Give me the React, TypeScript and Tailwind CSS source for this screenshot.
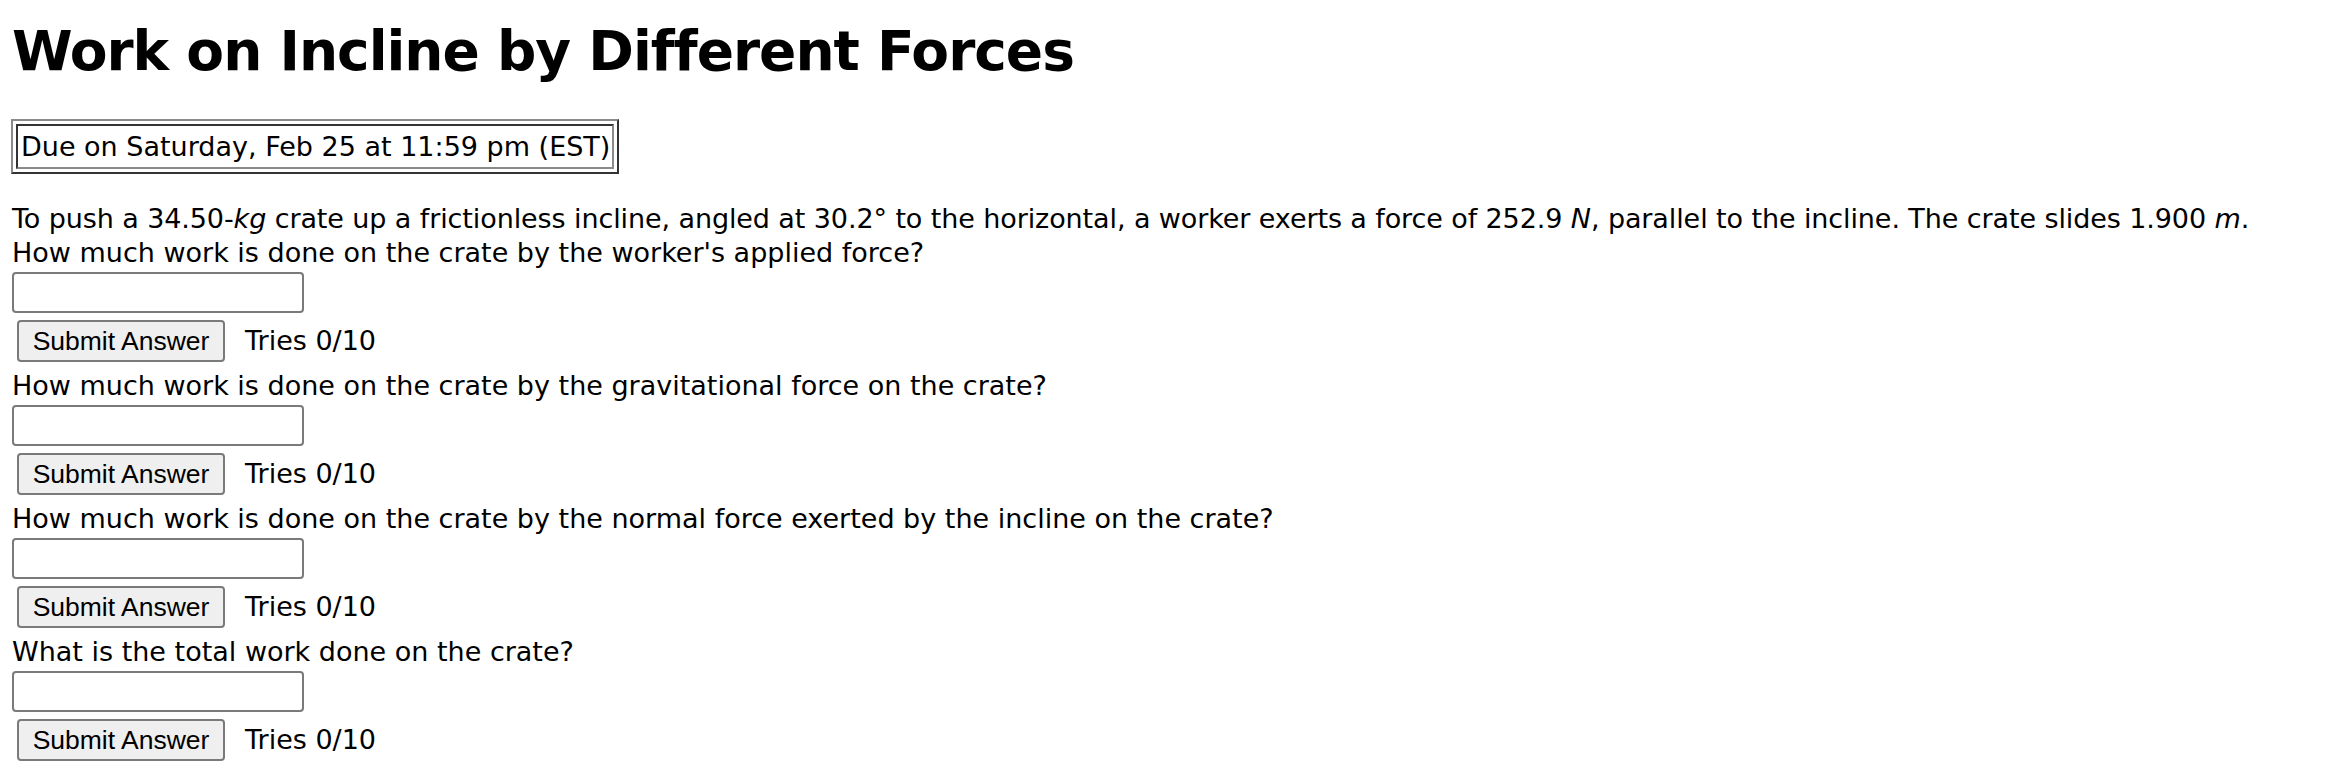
import React from "react";

const questions = [
  "How much work is done on the crate by the worker's applied force?",
  "How much work is done on the crate by the gravitational force on the crate?",
  "How much work is done on the crate by the normal force exerted by the incline on the crate?",
  "What is the total work done on the crate?",
];

function Block({ q, first }: { q: string; first: boolean }) {
  return (
    <div className={first ? "" : "mt-[7px]"}>
      {!first && <div className="h-[34px] leading-[34px] whitespace-nowrap">{q}</div>}
      <input
        type="text"
        className="block mt-[2px] w-[292px] h-[41px] border-2 border-[#7a7a7a] rounded-[4px] bg-white outline-none"
      />
      <div className="mt-[7px] flex items-center h-[42px]">
        <button className="ml-[5px] h-[42px] w-[208px] border-2 border-[#7a7a7a] rounded-[4px] bg-[#efefef] text-[26.5px] leading-none text-black [font-family:'Liberation_Sans',Arial,sans-serif]">
          Submit Answer
        </button>
        <span className="ml-[20px]">Tries 0/10</span>
      </div>
    </div>
  );
}

export default function App() {
  return (
    <div className="bg-white min-h-[782px] text-black px-[12px] pt-[19px] [font-family:'DejaVu_Sans',Verdana,sans-serif] text-[27px]">
      <h1 className="font-bold text-[55px] leading-[64px] tracking-[-1px] whitespace-nowrap">
        Work on Incline by Different Forces
      </h1>
      <div className="mt-[36px] ml-[-1px] inline-block border-2 border-t-[#8a8a8a] border-l-[#8a8a8a] border-b-[#333333] border-r-[#333333] p-[3px]">
        <div className="border-2 border-t-[#333333] border-l-[#333333] border-b-[#8a8a8a] border-r-[#8a8a8a] pl-[3px] pr-[2px] pt-[4px] pb-[3px] leading-[34px] whitespace-nowrap">
          Due on Saturday, Feb 25 at 11:59 pm (EST)
        </div>
      </div>
      <div className="mt-[28px] leading-[34px]">
        <div className="whitespace-nowrap tracking-[-0.1px]">
          To push a 34.50-<i>kg</i> crate up a frictionless incline, angled at 30.2° to the horizontal, a worker
          exerts a force of 252.9 <i>N</i>, parallel to the incline. The crate slides 1.900 <i>m</i>.
        </div>
        <div className="whitespace-nowrap">{questions[0]}</div>
      </div>
      {questions.map((q, i) => (
        <Block key={i} q={q} first={i === 0} />
      ))}
    </div>
  );
}
